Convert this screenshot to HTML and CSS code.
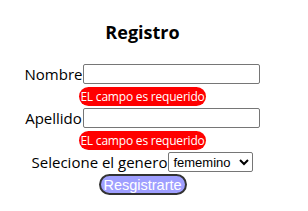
FILE: index.html
```html
<!DOCTYPE html>
<html lang="es">
  <head>
    <meta charset="UTF-8" />
    <meta name="viewport" content="width=device-width, initial-scale=1.0" />
    <title>Registro</title>
    <link rel="stylesheet" href="styles.css">
  </head>
  <body>
    <div class="container">
      <h3 class="title">Registro</h3>

      <!-- Nombre -->
      <div class="field">
        <label for="nombre">Nombre</label>
        <input type="text" id="nombre" />
      </div>
      <div class="error">EL campo es requerido</div>

      <!-- Apellido -->
      <div class="field">
        <label for="apellido">Apellido</label>
        <input type="text" id="apellido" />
      </div>
      <div class="error">EL campo es requerido</div>

      <!-- Genero -->
      <div class="field">
        <label for="genero">Selecione el genero</label>
        <select id="genero">
          <option>fememino</option>
          <option>masculino</option>
        </select>
      </div>

      <button class="btn">Resgistrarte</button>
    </div>
  </body>
</html>
```

FILE: styles.css
```css
body {
  margin: 0;
  font-family: "Open Sans", "Noto Sans", sans-serif;
  color: #000;
  background: #fff;
}

.container {
  width: 285px;
  display: flex;
  flex-direction: column;
  align-items: center;
}

.title {
  font-size: 18px;
  font-weight: bold;
  margin: 20px 0 20px;
  line-height: 24px;
}

.field {
  display: flex;
  align-items: center;
  font-size: 15px;
  height: 20px;
}

.field input {
  width: 177px;
  height: 20px;
  box-sizing: border-box;
  margin: 0 0 0 1px;
  border: 1px solid #767676;
  border-radius: 2px;
  padding: 0;
}

.field select {
  width: 85px;
  height: 20px;
  box-sizing: border-box;
  margin-left: 1px;
  font-family: "Liberation Sans", Arial, sans-serif;
  font-size: 13px;
  border: 1px solid #767676;
  border-radius: 2px;
  background: #fff;
}

.error {
  margin: 3px 0 2px;
  height: 19px;
  background: #ff0000;
  color: #fff;
  font-size: 12px;
  letter-spacing: -0.2px;
  line-height: 19px;
  padding: 0 1px;
  border-radius: 10px;
}

.btn {
  margin-top: 2px;
  width: 88px;
  height: 21px;
  padding: 0;
  background: #9f9fff;
  color: #fff;
  font-family: "Liberation Sans", Arial, sans-serif;
  font-size: 14.5px;
  border: 2px solid #333;
  border-radius: 11px;
}
```
